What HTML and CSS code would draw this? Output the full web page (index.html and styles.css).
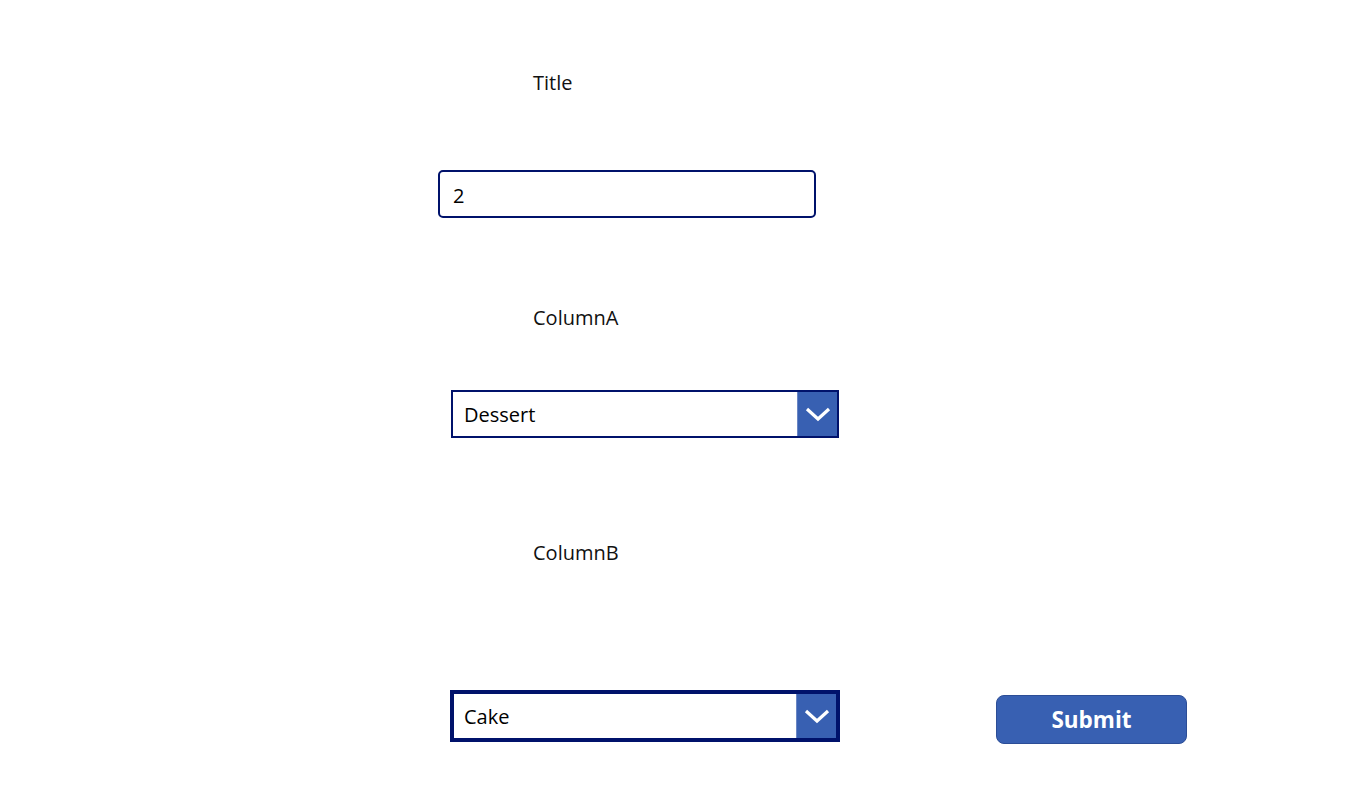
FILE: index.html
```html
<!DOCTYPE html>
<html lang="en">
  <head>
    <meta charset="UTF-8" />
    <meta name="viewport" content="width=device-width, initial-scale=1.0" />
    <title>Edit form</title>
    <link rel="stylesheet" href="styles.css">
  </head>
  <body>
    <div class="form">
      <p class="field-label label-title">Title</p>
      <div class="text-input">2</div>

      <p class="field-label label-a">ColumnA</p>
      <div class="dropdown dropdown-a">
        <span class="dropdown-value">Dessert</span>
        <span class="chevron">
          <svg width="28" height="16" viewBox="0 0 28 16">
            <path d="M3 3 L14 13 L25 3" fill="none" stroke="white" stroke-width="3.2" />
          </svg>
        </span>
      </div>

      <p class="field-label label-b">ColumnB</p>
      <div class="bottom-row">
        <div class="dropdown dropdown-b">
          <span class="dropdown-value">Cake</span>
          <span class="chevron">
            <svg width="28" height="16" viewBox="0 0 28 16">
              <path d="M3 3 L14 13 L25 3" fill="none" stroke="white" stroke-width="3.2" />
            </svg>
          </span>
        </div>
        <button class="submit-button">Submit</button>
      </div>
    </div>
  </body>
</html>
```

FILE: styles.css
```css
body{
  margin: 0;
  background-color: white;
  color: black;
  font-family: "Open Sans", "Noto Sans", sans-serif;
}
.form{
  padding-top: 71px;
}
.field-label{
  margin: 0;
  margin-left: 533px;
  font-size: 20px;
  line-height: 24px;
  color: #111;
}
.text-input{
  box-sizing: border-box;
  margin-top: 75px;
  margin-left: 438px;
  width: 378px;
  height: 48px;
  border: 2px solid #00126b;
  border-radius: 5px;
  padding-left: 13px;
  font-size: 20px;
  line-height: 48px;
}
.label-a{
  margin-top: 88px;
}
.dropdown{
  box-sizing: border-box;
  display: flex;
  align-items: stretch;
  border: 2px solid #00126b;
  background-color: white;
}
.dropdown-a{
  margin-top: 60px;
  margin-left: 451px;
  width: 388px;
  height: 48px;
}
.dropdown-value{
  flex: 1;
  padding-left: 11px;
  font-size: 20px;
  line-height: 45px;
}
.chevron{
  width: 39px;
  background-color: #3860b2;
  border-left: 1px solid #6a86c4;
  display: flex;
  align-items: center;
  justify-content: center;
}
.label-b{
  margin-top: 103px;
}
.bottom-row{
  display: flex;
  align-items: flex-start;
  margin-top: 125px;
  margin-left: 450px;
}
.dropdown-b{
  width: 390px;
  height: 52px;
  border-width: 4px;
}
.dropdown-b .dropdown-value{
  padding-left: 10px;
  line-height: 46px;
}
.submit-button{
  margin-top: 5px;
  margin-left: 156px;
  width: 191px;
  height: 49px;
  background-color: #3860b2;
  border: 1px solid #2c4d96;
  border-radius: 8px;
  color: white;
  font-family: "Open Sans", "Noto Sans", sans-serif;
  font-weight: bold;
  font-size: 22.5px;
  line-height: 45px;
  padding: 0;
  cursor: pointer;
}
```
